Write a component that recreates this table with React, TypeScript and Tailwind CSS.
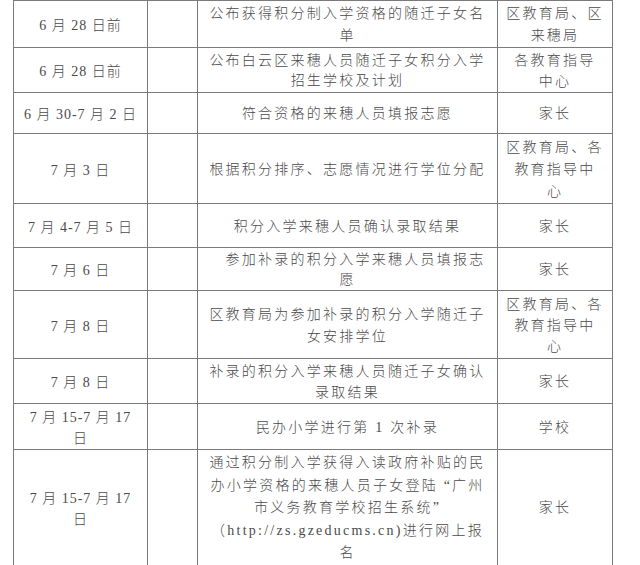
const rows: { h: string; date: string[]; event: string[]; org: string[]; ev?: string; og?: string }[] = [
  { h: 'h-[47px]', date: ['6 月 28 日前'], event: ['公布获得积分制入学资格的随迁子女名', '单'], org: ['区教育局、区', '来穗局'] },
  { h: 'h-[45px]', date: ['6 月 28 日前'], event: ['公布白云区来穗人员随迁子女积分入学', '招生学校及计划'], org: ['各教育指导', '中心'], ev: 'h-[20px] leading-[20px]', og: 'h-[21px] leading-[21px]' },
  { h: 'h-[41px]', date: ['6 月 30-7 月 2 日'], event: ['符合资格的来穗人员填报志愿'], org: ['家长'] },
  { h: 'h-[70px]', date: ['7 月 3 日'], event: ['根据积分排序、志愿情况进行学位分配'], org: ['区教育局、各', '教育指导中', '心'] },
  { h: 'h-[44px]', date: ['7 月 4-7 月 5 日'], event: ['积分入学来穗人员确认录取结果'], org: ['家长'] },
  { h: 'h-[43px]', date: ['7 月 6 日'], event: ['\u3000参加补录的积分入学来穗人员填报志', '愿'], org: ['家长'], ev: 'h-[20px] leading-[20px]' },
  { h: 'h-[68px]', date: ['7 月 8 日'], event: ['区教育局为参加补录的积分入学随迁子', '女安排学位'], org: ['区教育局、各', '教育指导中', '心'], og: 'h-[21px] leading-[21px]' },
  { h: 'h-[45px]', date: ['7 月 8 日'], event: ['补录的积分入学来穗人员随迁子女确认', '录取结果'], org: ['家长'], ev: 'h-[21px] leading-[21px]' },
  { h: 'h-[45px]', date: ['7 月 15-7 月 17', '日'], event: ['民办小学进行第 1 次补录'], org: ['学校'] },
  {
    h: 'h-[115px]',
    date: ['7 月 15-7 月 17', '日'],
    event: [
      '通过积分制入学获得入读政府补贴的民',
      '办小学资格的来穗人员子女登陆 “广州',
      '市义务教育学校招生系统”',
      '（http://zs.gzeducms.cn)进行网上报',
      '名',
    ],
    org: ['家长'],
    ev: 'h-[22.5px] leading-[22.5px]',
  },
]

// one cell = fixed-height lines stacked, centred
function Lines({ lines, lc }: { lines: string[]; lc: string }) {
  return (
    <>
      {lines.map((l, i) => (
        <div key={i} className={`whitespace-pre ${lc}`}>
          {l}
        </div>
      ))}
    </>
  )
}

export default function App() {
  return (
    <div className="w-[640px] h-[565px] bg-white overflow-hidden font-['Liberation_Serif','Noto_Sans_CJK_SC',serif] text-[14px] text-[#4a4a4a] font-light">
      <table className="ml-[13px] w-[599px] table-fixed border-collapse">
        <colgroup>
          <col className="w-[134px]" />
          <col className="w-[50px]" />
          <col className="w-[300px]" />
          <col className="w-[115px]" />
        </colgroup>
        <tbody>
          {rows.map((r, i) => (
            <tr key={i} className={r.h}>
              <td className="border border-[#7a7a7a] p-0 pt-[3px] text-center align-middle tracking-[1px]">
                <Lines lines={r.date} lc="h-[21px] leading-[21px]" />
              </td>
              <td className="border border-[#7a7a7a] p-0" />
              <td className="border border-[#7a7a7a] p-0 pt-[2px] text-center align-middle tracking-[2.25px]">
                <Lines lines={r.event} lc={r.ev ?? 'h-[22px] leading-[22px]'} />
              </td>
              <td className="border border-[#7a7a7a] p-0 pt-[2px] text-center align-middle tracking-[2.25px]">
                <Lines lines={r.org} lc={r.og ?? 'h-[22px] leading-[22px]'} />
              </td>
            </tr>
          ))}
        </tbody>
      </table>
    </div>
  )
}
